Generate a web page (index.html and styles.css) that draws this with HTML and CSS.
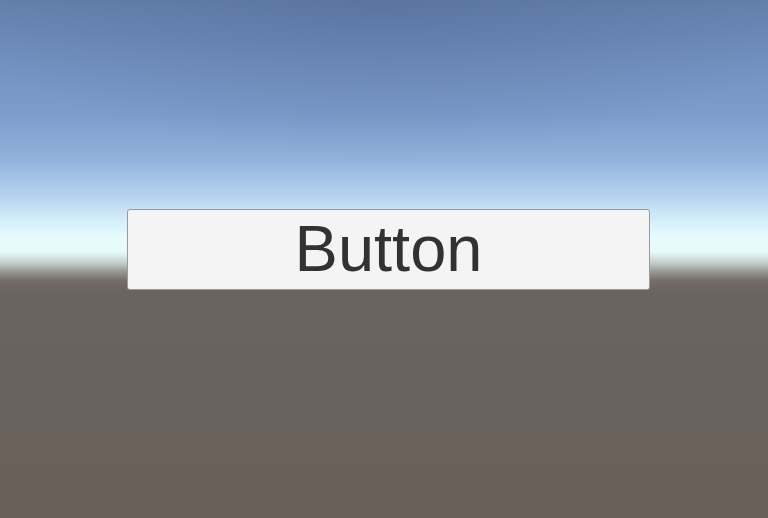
FILE: index.html
```html
<!DOCTYPE html>
<html>
<head>
<meta charset="utf-8">
<link rel="stylesheet" href="styles.css">
</head>
<body>
<div class="scene">
  <button class="btn">Button</button>
</div>
</body>
</html>
```
FILE: styles.css
```css
html, body {
  margin: 0;
  padding: 0;
  width: 768px;
  height: 518px;
  overflow: hidden;
}
.scene {
  width: 768px;
  height: 518px;
  box-sizing: border-box;
  padding: 209px 0 0 127px;
  background:
    radial-gradient(ellipse 420px 160px at 50% 0%, rgba(70, 95, 140, 0.35), rgba(70, 95, 140, 0) 100%),
    linear-gradient(to bottom,
      #6480aa 0px,
      #7290bf 60px,
      #7e9dcc 115px,
      #91b1db 158px,
      #b4d2ee 195px,
      #d4eef9 220px,
      #e8fcff 238px,
      #e6fafa 252px,
      #c2cecc 263px,
      #949692 272px,
      #736c67 281px,
      #6b635e 292px,
      #686059 518px);
}
.btn {
  display: flex;
  align-items: center;
  justify-content: center;
  width: 523px;
  height: 81px;
  margin: 0;
  padding: 0 0 2px 0;
  box-sizing: border-box;
  background: #f4f4f4;
  border: 1px solid #9a9a9a;
  border-radius: 3px;
  font-family: "Liberation Sans", Arial, sans-serif;
  font-size: 65px;
  color: #323232;
  line-height: 1;
}
```
